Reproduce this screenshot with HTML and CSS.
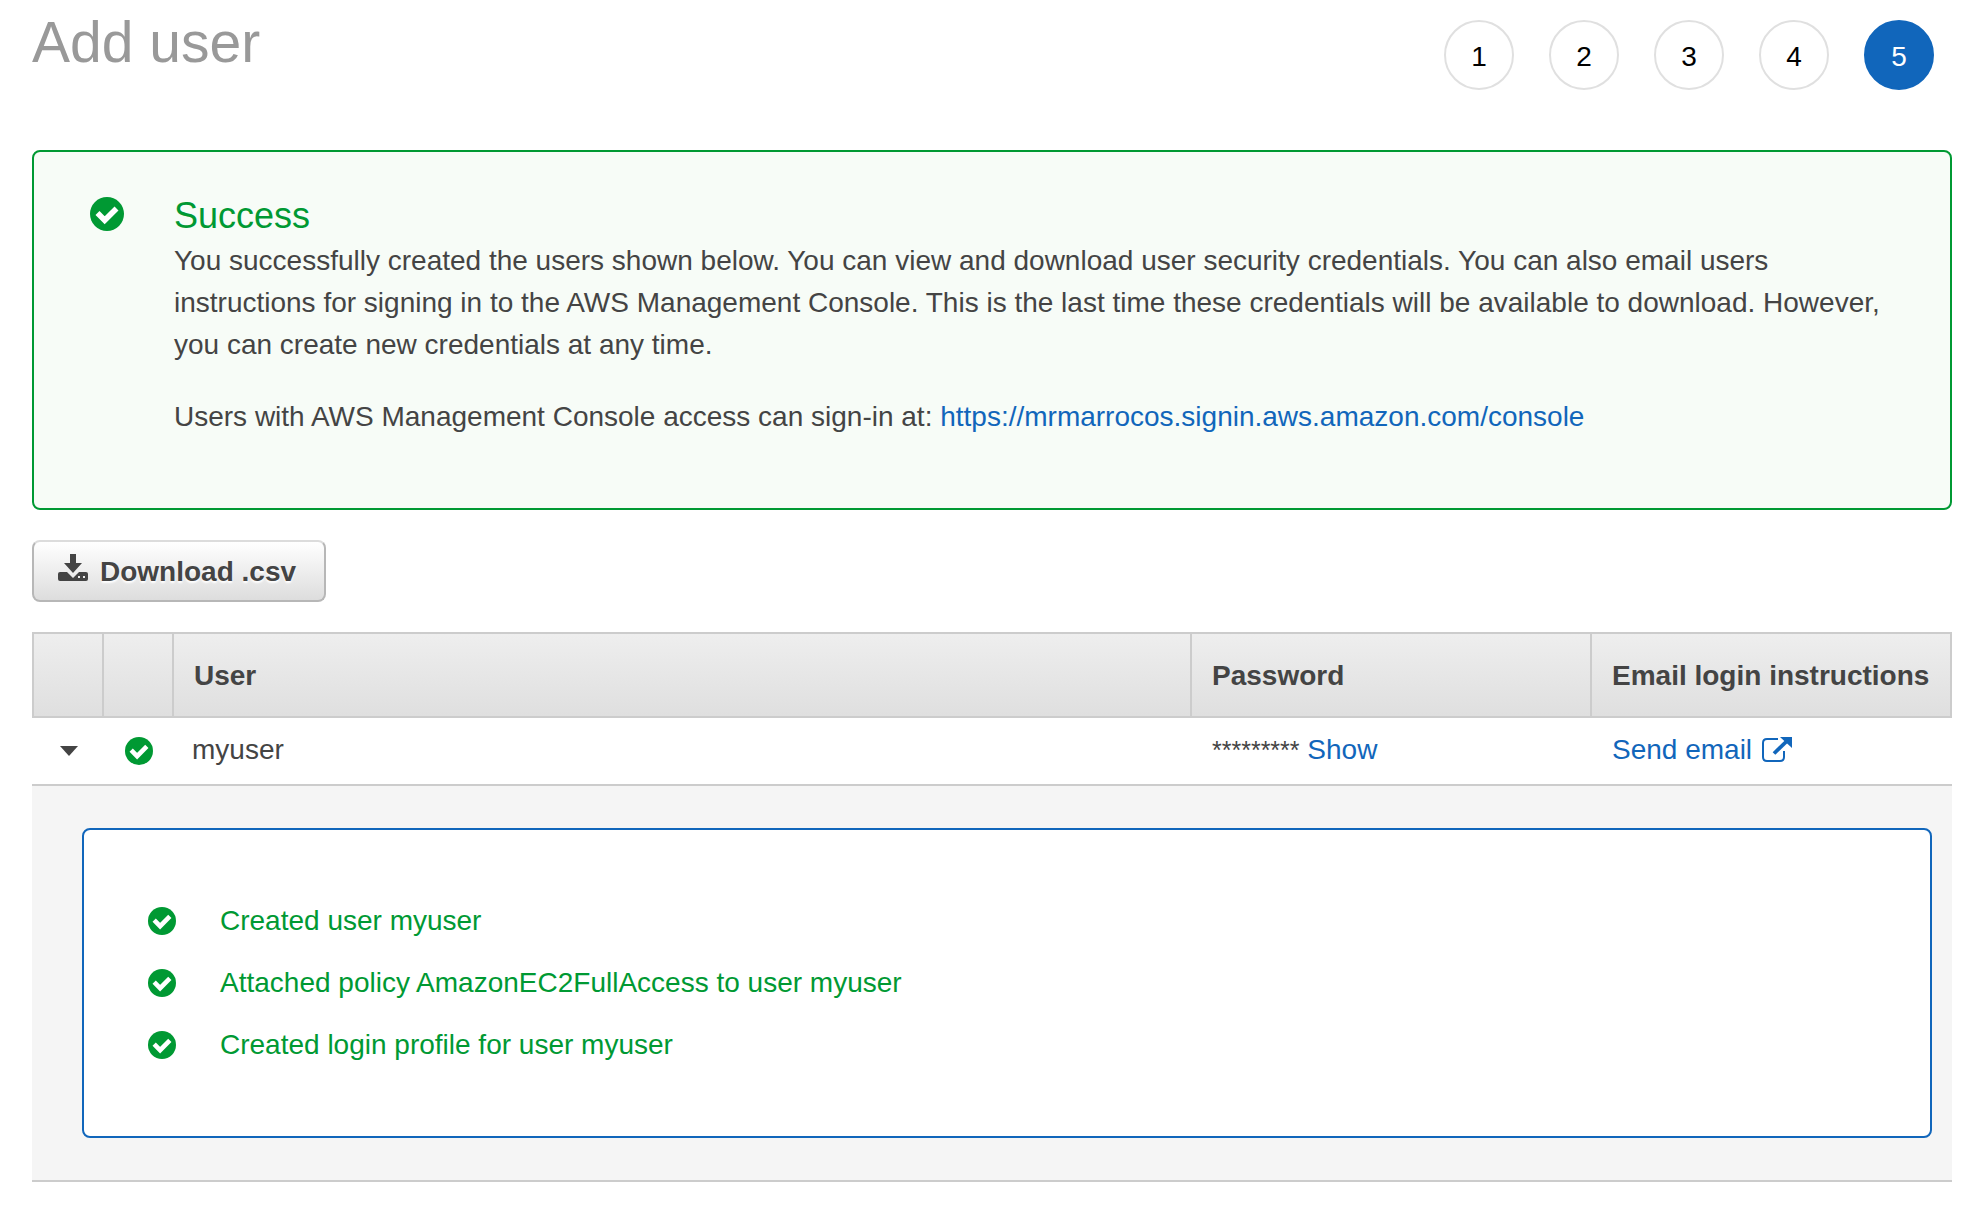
FILE: index.html
```html
<!DOCTYPE html>
<html lang="en">
<head>
<meta charset="utf-8">
<title>Add user</title>
<link rel="stylesheet" href="styles.css">
</head>
<body>
<svg class="sprite" aria-hidden="true">
  <symbol id="check" viewBox="0 0 34 34">
    <circle cx="17" cy="17" r="17" fill="currentColor"/>
    <path d="M7.500 16 14.700 23.300 26.500 11.500" fill="none" stroke="#fff" stroke-width="5.600"/>
  </symbol>
</svg>
<header class="page-header">
  <h1 class="title">Add user</h1>
  <ol class="steps">
    <li class="step">1</li>
    <li class="step">2</li>
    <li class="step">3</li>
    <li class="step">4</li>
    <li class="step current" aria-current="step">5</li>
  </ol>
</header>
<main class="content">
  <section class="alert">
    <svg class="alert-icon"><use href="#check"/></svg>
    <div class="alert-body">
      <h2 class="alert-title">Success</h2>
      <p class="alert-text">You successfully created the users shown below. You can view and download user security credentials. You can also email users instructions for signing in to the AWS Management Console. This is the last time these credentials will be available to download. However, you can create new credentials at any time.</p>
      <p class="alert-text">Users with AWS Management Console access can sign-in at: <a class="link" href="https://mrmarrocos.signin.aws.amazon.com/console">https://mrmarrocos.signin.aws.amazon.com/console</a></p>
    </div>
  </section>

  <button class="button" type="button">
    <svg class="button-icon" viewBox="0 0 30 28" aria-hidden="true">
      <path fill="currentColor" d="M12 0h6v9h6l-9 10-9-10h6zM2 18h7l6 6 6-6h7q2 0 2 2v5q0 2-2 2H2q-2 0-2-2v-5q0-2 2-2z"/>
      <path fill="#eee" d="M20 22h2v2h-2zM25 22h2v2h-2z"/>
    </svg>
    Download .csv
  </button>

  <table class="users">
    <colgroup>
      <col class="col-icon"><col class="col-icon"><col><col class="col-password"><col class="col-email">
    </colgroup>
    <thead>
      <tr>
        <th></th>
        <th></th>
        <th scope="col">User</th>
        <th scope="col">Password</th>
        <th scope="col">Email login instructions</th>
      </tr>
    </thead>
    <tbody>
      <tr class="user-row">
        <td class="cell-icon"><button class="toggle" type="button" aria-label="Collapse details" aria-expanded="true"></button></td>
        <td class="cell-icon"><svg class="status-icon"><use href="#check"/></svg></td>
        <td class="cell-name">myuser</td>
        <td><span class="mask">*********</span> <a class="link" href="#show">Show</a></td>
        <td><a class="link" href="#email">Send email <svg class="external" viewBox="0 0 30 28" aria-hidden="true"><path d="M16 3H5Q1 3 1 7V21q0 4 4 4h13q4 0 4-4v-6" fill="none" stroke="currentColor" stroke-width="2"/><path d="M12 17.500 26 4" fill="none" stroke="currentColor" stroke-width="3.800"/><path d="M18 1h12v11z" fill="currentColor"/></svg></a></td>
      </tr>
      <tr class="detail-row">
        <td colspan="5">
          <ul class="events">
            <li class="event"><svg class="status-icon"><use href="#check"/></svg>Created user myuser</li>
            <li class="event"><svg class="status-icon"><use href="#check"/></svg>Attached policy AmazonEC2FullAccess to user myuser</li>
            <li class="event"><svg class="status-icon"><use href="#check"/></svg>Created login profile for user myuser</li>
          </ul>
        </td>
      </tr>
    </tbody>
  </table>
</main>
</body>
</html>
```
FILE: styles.css
```css
* { box-sizing: border-box; }

body {
  margin: 0;
  padding: 12px 32px 24px;
  background: #fff;
  color: #444;
  font: 28px/42px "Helvetica Neue", "Liberation Sans", Arial, sans-serif;
}

.sprite { display: none; }

.page-header {
  display: flex;
  justify-content: space-between;
  align-items: flex-start;
  padding-right: 18px;
  margin-bottom: 60px;
}

.title {
  margin: 0;
  color: #999;
  font-size: 57px;
  font-weight: 400;
  line-height: 60px;
}

.steps {
  display: flex;
  gap: 35px;
  margin: 0;
  padding: 8px 0 0;
  list-style: none;
}

.step {
  width: 70px;
  height: 70px;
  border: 2px solid #e0e0e0;
  border-radius: 50%;
  color: #000;
  line-height: 70px;
  text-align: center;
}

.step.current {
  border-color: #1166bb;
  background: #1166bb;
  color: #fff;
}

.link { color: #1166bb; text-decoration: none; }

.alert {
  display: flex;
  gap: 50px;
  padding: 40px 40px 70px 56px;
  border: 2px solid #009933;
  border-radius: 8px;
  background: #f7fcf7;
}

.alert-icon {
  flex: none;
  width: 34px;
  height: 34px;
  margin-top: 5px;
  color: #009933;
}

.alert-title {
  margin: 0;
  color: #009933;
  font-size: 36px;
  font-weight: 400;
  line-height: 48px;
}

.alert-text { margin: 0 0 30px; }
.alert-text:last-child { margin: 0; }

.button {
  display: flex;
  align-items: center;
  gap: 12px;
  height: 62px;
  margin: 30px 0;
  padding: 2px 28px 0 24px;
  border: 2px solid #b7b7b7;
  border-top-color: #dcdcdc;
  border-radius: 8px;
  background: linear-gradient(#fff, #ddd);
  color: #444;
  font: bold 28px/42px "Helvetica Neue", "Liberation Sans", Arial, sans-serif;
  text-shadow: 0 2px 2px #fff;
}

.button-icon { width: 30px; height: 28px; margin-bottom: 8px; }

.users {
  width: 100%;
  border-collapse: separate;
  border-spacing: 0;
  table-layout: fixed;
}

.col-icon { width: 70px; }
.col-password { width: 400px; }
.col-email { width: 362px; }

.users th {
  height: 86px;
  padding: 2px 20px 0;
  border: 2px solid #ccc;
  border-right-width: 0;
  background: linear-gradient(#eee, #dfdfdf);
  text-align: left;
  white-space: nowrap;
}

.users th:last-child { padding-right: 10px; border-right-width: 2px; }

.users td {
  padding: 11px 22px 13px;
  border-bottom: 2px solid #ccc;
}

.users .cell-name { padding-left: 20px; }
.users .cell-icon { padding: 0 0 0 4px; line-height: 0; text-align: center; }

.toggle {
  width: 18px;
  height: 10px;
  padding: 0;
  border: 0;
  background: #444;
  clip-path: polygon(0 0, 100% 0, 50% 100%);
  vertical-align: middle;
}

.status-icon {
  flex: none;
  width: 28px;
  height: 28px;
  color: #009933;
  vertical-align: middle;
}

.mask { font-size: 25px; }

.external {
  width: 30px;
  height: 28px;
  margin-left: 2px;
  vertical-align: -5px;
}

.users .detail-row td { padding: 42px 20px 42px 50px; background: #f5f5f5; }

.events {
  display: grid;
  gap: 20px;
  margin: 0;
  padding: 70px 64px;
  border: 2px solid #1166bb;
  border-radius: 8px;
  background: #fff;
  color: #009933;
  list-style: none;
}

.event { display: flex; align-items: center; gap: 44px; }
```
